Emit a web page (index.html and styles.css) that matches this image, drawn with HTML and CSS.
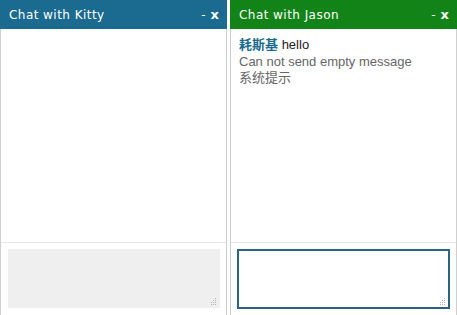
FILE: index.html
```html
<!DOCTYPE html>
<html>
<head>
<meta charset="utf-8">
<link rel="stylesheet" href="styles.css">
</head>
<body>
<div class="wrap">
  <div class="panel">
    <div class="head blue">
      <span class="title">Chat with Kitty</span>
      <span class="ctrl"><span class="min">-</span><span class="close">x</span></span>
    </div>
    <div class="body">
      <div class="msgs"></div>
      <div class="input">
        <div class="box gray">
          <textarea class="ta"></textarea>
          <svg class="grip" width="7" height="7" viewBox="0 0 7 7"><g fill="#b5b5b5"><rect x="5" y="0" width="1" height="1"/><rect x="3" y="2" width="1" height="1"/><rect x="5" y="2" width="1" height="1"/><rect x="1" y="4" width="1" height="1"/><rect x="3" y="4" width="1" height="1"/><rect x="5" y="4" width="1" height="1"/><rect x="1" y="6" width="1" height="1"/><rect x="3" y="6" width="1" height="1"/><rect x="5" y="6" width="1" height="1"/></g></svg>
        </div>
      </div>
    </div>
  </div>
  <div class="panel">
    <div class="head green">
      <span class="title">Chat with Jason</span>
      <span class="ctrl"><span class="min">-</span><span class="close">x</span></span>
    </div>
    <div class="body">
      <div class="msgs">
        <div class="line"><span class="name">耗斯基</span> <span class="text">hello</span></div>
        <div class="line sys">Can not send empty message</div>
        <div class="line sys">系统提示</div>
      </div>
      <div class="input">
        <div class="box focus">
          <textarea class="ta"></textarea>
          <svg class="grip" width="7" height="7" viewBox="0 0 7 7"><g fill="#b5b5b5"><rect x="5" y="0" width="1" height="1"/><rect x="3" y="2" width="1" height="1"/><rect x="5" y="2" width="1" height="1"/><rect x="1" y="4" width="1" height="1"/><rect x="3" y="4" width="1" height="1"/><rect x="5" y="4" width="1" height="1"/><rect x="1" y="6" width="1" height="1"/><rect x="3" y="6" width="1" height="1"/><rect x="5" y="6" width="1" height="1"/></g></svg>
        </div>
      </div>
    </div>
  </div>
</div>
</body>
</html>
```
FILE: styles.css
```css
html, body {
  margin: 0;
  padding: 0;
  background: #ffffff;
}
.wrap {
  display: flex;
  gap: 3px;
  width: 457px;
  height: 315px;
  overflow: hidden;
}
.panel {
  width: 227px;
  flex: 0 0 227px;
  display: flex;
  flex-direction: column;
}
.head {
  height: 29px;
  display: flex;
  align-items: center;
  justify-content: space-between;
  padding: 0 8px 0 9px;
  color: #ffffff;
  font-family: "DejaVu Sans", Verdana, sans-serif;
  font-size: 12px;
  box-sizing: border-box;
}
.blue { background: #1b6a90; }
.green { background: #128417; }
.title { padding-top: 1px; letter-spacing: 0.45px; }
.ctrl { display: flex; gap: 5px; align-items: center; }
.close { font-weight: bold; font-size: 13px; }
.body {
  flex: 1;
  display: flex;
  flex-direction: column;
  border-left: 1px solid #cfcfcf;
  border-right: 1px solid #cfcfcf;
}
.msgs {
  height: 214px;
  padding: 8px 8px 0 8px;
  box-sizing: border-box;
  border-bottom: 1px solid #e6e6e6;
  font-family: "Liberation Sans", Arial, "Noto Sans CJK SC", sans-serif;
  font-size: 13px;
  line-height: 16.5px;
}
.name { color: #1b6a90; font-weight: bold; }
.text { color: #222222; }
.sys { color: #666666; }
.input {
  padding: 6px 6px 0 6px;
}
.box {
  position: relative;
  height: 59px;
  box-sizing: border-box;
}
.gray { background: #efefef; margin-left: 1px; }
.focus { border: 2px solid #2a6482; background: #ffffff; height: 60px; }
.ta {
  display: block;
  width: 100%;
  height: 100%;
  border: 0;
  margin: 0;
  padding: 0;
  background: transparent;
  resize: none;
  outline: none;
}
.grip {
  position: absolute;
  right: 3px;
  bottom: 3px;
}
.focus .grip { right: 2px; bottom: 2px; }
```
